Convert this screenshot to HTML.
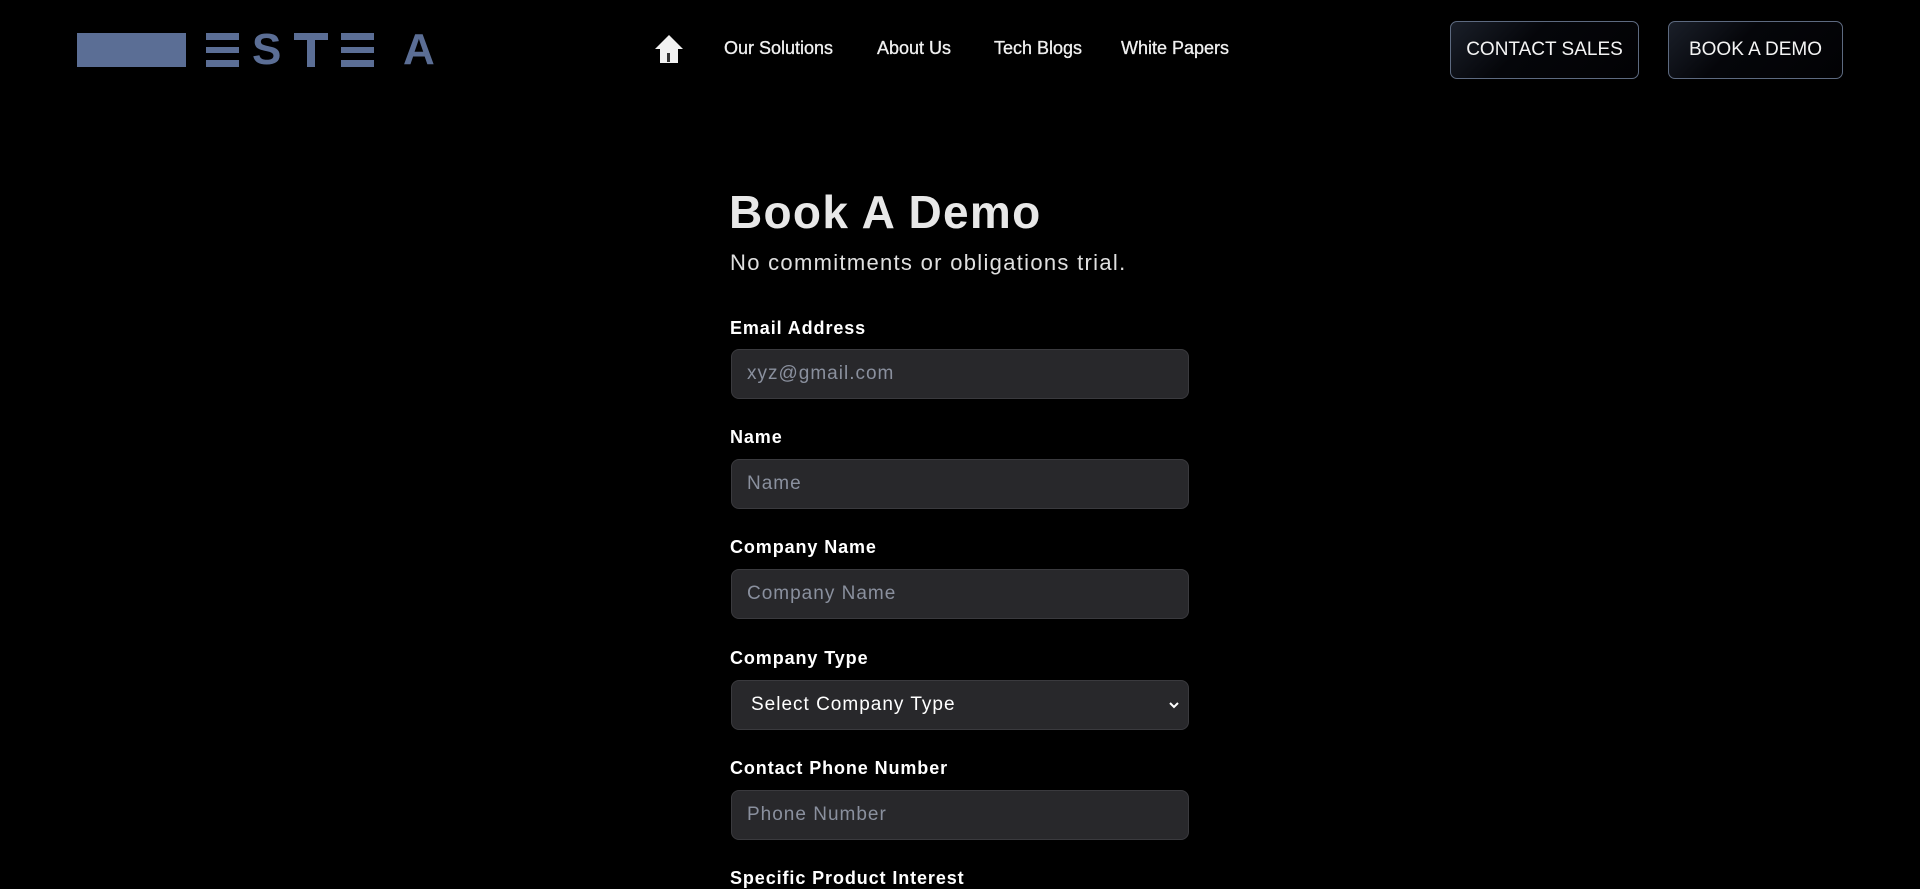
<!DOCTYPE html>
<html><head><meta charset="utf-8"><style>
html,body{margin:0;padding:0;background:#000;width:1920px;height:883px;overflow:hidden;font-family:"Liberation Sans",sans-serif;color:#fff}
.a{position:absolute}
.nav{font-size:18px;top:38px;color:#f0f0f0;-webkit-text-stroke:0.3px #f0f0f0}
.btn{top:21px;height:58px;border:1px solid #5d6a80;border-radius:7px;background:linear-gradient(135deg,#1a1f29,#05060a 40%,#020204);font-size:19px;display:flex;align-items:center;justify-content:center;color:#f4f4f4;box-sizing:border-box}
.lbl{left:730px;font-size:18px;font-weight:bold;color:#fff;letter-spacing:0.9px}
.in{left:731px;width:458px;height:50px;background:#28282b;border:1px solid #3a3a3e;border-radius:8px;box-sizing:border-box;font-size:19px;color:#8a909e;padding-left:15px;display:flex;align-items:center;letter-spacing:1px}
.lg{background:#5b6e95}
</style></head><body>
<div class="a lg" style="left:77px;top:33px;width:109px;height:34px"></div>
<div class="a lg" style="left:206px;top:33px;width:33px;height:7px"></div>
<div class="a lg" style="left:206px;top:47px;width:33px;height:6px"></div>
<div class="a lg" style="left:206px;top:60px;width:33px;height:7px"></div>
<div class="a" style="left:252px;top:28px;font-size:44px;font-weight:bold;color:#5b6e95;line-height:44px">S</div>
<div class="a lg" style="left:294px;top:33px;width:34px;height:7px"></div>
<div class="a lg" style="left:307px;top:33px;width:8px;height:34px"></div>
<div class="a lg" style="left:341px;top:33px;width:33px;height:7px"></div>
<div class="a lg" style="left:341px;top:47px;width:33px;height:6px"></div>
<div class="a lg" style="left:341px;top:60px;width:33px;height:7px"></div>
<div class="a" style="left:403px;top:28px;font-size:44px;font-weight:bold;color:#5b6e95;line-height:44px">A</div>
<svg class="a" style="left:654px;top:34px" width="30" height="30" viewBox="0 0 30 30"><path d="M15 1 L29 15 H24 V29 H6 V15 H1 Z" fill="#f2f2f2"/><rect x="13" y="19" width="3" height="9" fill="#333"/></svg>
<div class="a nav" style="left:724px">Our Solutions</div>
<div class="a nav" style="left:877px">About Us</div>
<div class="a nav" style="left:994px">Tech Blogs</div>
<div class="a nav" style="left:1121px">White Papers</div>
<div class="a btn" style="left:1450px;width:189px">CONTACT SALES</div>
<div class="a btn" style="left:1668px;width:175px">BOOK A DEMO</div>
<div class="a" style="left:729px;top:185px;font-size:46px;font-weight:bold;color:#e8e8e8;letter-spacing:1.3px">Book A Demo</div>
<div class="a" style="left:730px;top:250px;font-size:22px;color:#e0e0e0;letter-spacing:1.3px">No commitments or obligations trial.</div>
<div class="a lbl" style="top:318px">Email Address</div>
<div class="a in" style="top:349px">xyz@gmail.com</div>
<div class="a lbl" style="top:427px">Name</div>
<div class="a in" style="top:459px">Name</div>
<div class="a lbl" style="top:537px">Company Name</div>
<div class="a in" style="top:569px">Company Name</div>
<div class="a lbl" style="top:648px">Company Type</div>
<div class="a in" style="top:680px;color:#fff;padding-left:19px">Select Company Type
<svg class="a" style="right:8px;top:20px" width="12" height="9" viewBox="0 0 12 9"><path d="M2 2 L6 6 L10 2" stroke="#fff" stroke-width="2" fill="none"/></svg></div>
<div class="a lbl" style="top:758px">Contact Phone Number</div>
<div class="a in" style="top:790px">Phone Number</div>
<div class="a lbl" style="top:868px">Specific Product Interest</div>
</body></html>
